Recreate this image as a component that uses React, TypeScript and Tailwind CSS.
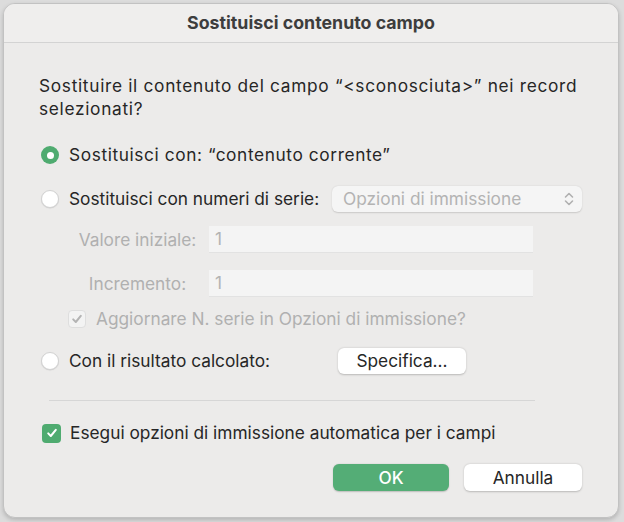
import React from "react";

const font = { fontFamily: "Inter, 'Noto Sans', sans-serif" };

function Radio({ checked }: { checked?: boolean }) {
  if (checked) {
    return (
      <span className="flex h-[18px] w-[18px] shrink-0 items-center justify-center rounded-full bg-[#4fab70]">
        <span className="h-[7px] w-[7px] rounded-full bg-white" />
      </span>
    );
  }
  return (
    <span className="h-[18px] w-[18px] shrink-0 rounded-full border border-[#d2d2d2] bg-white shadow-[0_0.5px_1px_rgba(0,0,0,0.12)]" />
  );
}

function Check({ disabled }: { disabled?: boolean }) {
  return (
    <span
      className={
        disabled
          ? "flex h-[18px] w-[18px] shrink-0 items-center justify-center rounded-[4px] border border-[#dedede] bg-[#f3f3f3]"
          : "flex h-[19px] w-[19px] shrink-0 items-center justify-center rounded-[4px] bg-[#4fab70]"
      }
    >
      <svg width="12" height="12" viewBox="0 0 12 12" fill="none">
        <path
          d="M2.2 6.4 L4.8 9 L9.8 2.8"
          stroke={disabled ? "#b4b4b4" : "#ffffff"}
          strokeWidth="2"
          strokeLinecap="round"
          strokeLinejoin="round"
        />
      </svg>
    </span>
  );
}

export default function App() {
  return (
    <div className="h-[522px] w-[624px] bg-[#dcdcdc] pl-[3px] pt-[3px]" style={font}>
      <div className="flex h-[515px] w-[616px] flex-col overflow-hidden rounded-[12px] border border-[#c2c2c2] bg-[#ecebea] text-[17.3px] text-[#262626] shadow-[0_2px_4px_rgba(0,0,0,0.18)]">
        {/* title bar */}
        <div className="flex h-[39px] shrink-0 items-center justify-center border-b border-[#d3d3d3] bg-[#efeeed] text-[17.8px] font-bold text-[#3d3d3d]">
          Sostituisci contenuto campo
        </div>

        <div className="flex flex-col pl-[35px] pr-[20px]">
          <p className="mt-[31px] whitespace-nowrap leading-[23px] tracking-[0.04em]">
            Sostituire il contenuto del campo “&lt;sconosciuta&gt;” nei record
            <br />
            selezionati?
          </p>

          {/* option 1 */}
          <div className="mt-[22px] flex h-[26px] items-center gap-[10px] pl-[2px]">
            <Radio checked />
            <span className="tracking-[0.035em]">Sostituisci con: “contenuto corrente”</span>
          </div>

          {/* option 2 */}
          <div className="mt-[18px] flex h-[26px] items-center pl-[2px]">
            <Radio />
            <span className="ml-[10px] w-[251px] whitespace-nowrap">Sostituisci con numeri di serie:</span>
            <div className="ml-[12px] flex h-[26px] w-[250px] items-center justify-between rounded-[6px] bg-[#f5f5f5] pl-[11px] pr-[8px] shadow-[0_0.5px_1.5px_rgba(0,0,0,0.15)]">
              <span className="text-[#b3b3b3]">Opzioni di immissione</span>
              <svg width="10" height="16" viewBox="0 0 10 16" fill="none">
                <path d="M1.5 6 L5 2.5 L8.5 6" stroke="#b0b0b0" strokeWidth="1.6" strokeLinecap="round" strokeLinejoin="round" />
                <path d="M1.5 10 L5 13.5 L8.5 10" stroke="#b0b0b0" strokeWidth="1.6" strokeLinecap="round" strokeLinejoin="round" />
              </svg>
            </div>
          </div>

          <div className="mt-[14px] flex h-[27px] items-center">
            <span className="ml-[33px] w-[131px] whitespace-nowrap text-center text-[#b0b0b0]">Valore iniziale:</span>
            <div className="ml-[6px] flex h-[27px] w-[324px] items-center border-b border-[#e2e2e2] bg-[#f4f4f4] pl-[6px] text-[#b3b3b3]">
              1
            </div>
          </div>

          <div className="mt-[17px] flex h-[27px] items-center">
            <span className="ml-[33px] w-[131px] whitespace-nowrap text-center text-[#b0b0b0]">Incremento:</span>
            <div className="ml-[6px] flex h-[27px] w-[324px] items-center border-b border-[#e2e2e2] bg-[#f4f4f4] pl-[6px] text-[#b3b3b3]">
              1
            </div>
          </div>

          <div className="mt-[12px] flex h-[20px] items-center gap-[10px] pl-[29px]">
            <Check disabled />
            <span className="whitespace-nowrap text-[#b0b0b0]">Aggiornare N. serie in Opzioni di immissione?</span>
          </div>

          {/* option 3 */}
          <div className="mt-[19px] flex h-[26px] items-center pl-[2px]">
            <Radio />
            <span className="ml-[10px] w-[269px] whitespace-nowrap">Con il risultato calcolato:</span>
            <button className="flex h-[26px] w-[128px] items-center justify-center rounded-[6px] bg-white text-[#262626] shadow-[0_0.5px_2px_rgba(0,0,0,0.22)]">
              Specifica...
            </button>
          </div>

          <div className="ml-[10px] mt-[26px] h-px w-[486px] bg-[#d6d6d6]" />

          <div className="mt-[22px] flex h-[20px] items-center gap-[9px] pl-[3px]">
            <Check />
            <span className="whitespace-nowrap">Esegui opzioni di immissione automatica per i campi</span>
          </div>

          <div className="mt-[21px] flex items-center gap-[15px] pl-[294px]">
            <button className="flex h-[27px] w-[116px] items-center justify-center rounded-[6px] bg-[#54ad76] font-medium text-white shadow-[0_0.5px_1.5px_rgba(0,0,0,0.2)]">
              OK
            </button>
            <button className="flex h-[27px] w-[118px] items-center justify-center rounded-[6px] bg-white text-[#262626] shadow-[0_0.5px_2px_rgba(0,0,0,0.22)]">
              Annulla
            </button>
          </div>
        </div>
      </div>
    </div>
  );
}
